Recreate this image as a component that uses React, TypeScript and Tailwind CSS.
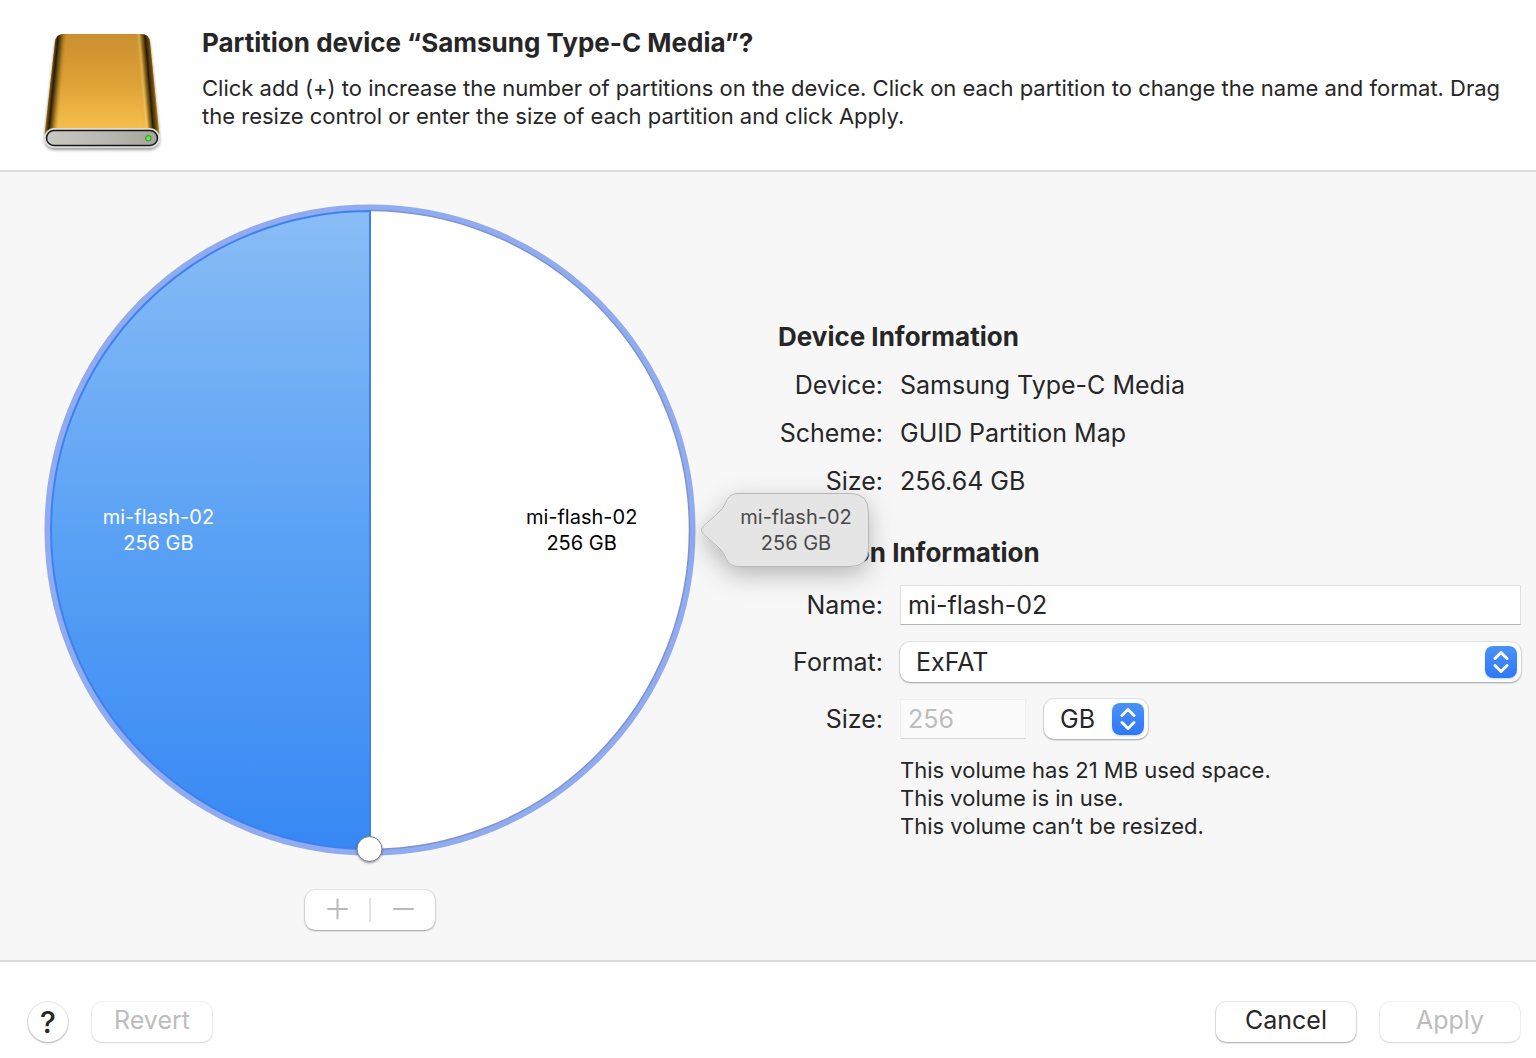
import React, { useState } from 'react';

const DEVICE_INFO = [
  { label: 'Device:', value: 'Samsung Type-C Media' },
  { label: 'Scheme:', value: 'GUID Partition Map' },
  { label: 'Size:', value: '256.64 GB' },
];

const NOTES = [
  'This volume has 21 MB used space.',
  'This volume is in use.',
  'This volume can’t be resized.',
];

const RAISED = 'bg-white shadow-[0_0_0_1px_rgba(0,0,0,0.07),0_1px_2px_rgba(0,0,0,0.3)]';
const RAISED_DISABLED = 'bg-white shadow-[0_0_0_1px_rgba(0,0,0,0.04),0_1px_2px_rgba(0,0,0,0.14)]';

function DriveIcon() {
  return (
    <svg className="w-[124px] h-[128px] shrink-0" viewBox="0 0 124 128" aria-hidden="true">
      <defs>
        <linearGradient id="gold" x1="0" y1="0" x2="0" y2="1">
          <stop offset="0" stopColor="#c98f2f" />
          <stop offset="0.45" stopColor="#dba035" />
          <stop offset="1" stopColor="#f8c24d" />
        </linearGradient>
        <linearGradient id="edgeLeft" gradientUnits="userSpaceOnUse" x1="8" y1="60" x2="22" y2="61.4">
          <stop offset="0" stopColor="#c08a2a" stopOpacity="0.5" />
          <stop offset="0.15" stopColor="#5c4008" stopOpacity="0.8" />
          <stop offset="0.35" stopColor="#1d1402" stopOpacity="0.95" />
          <stop offset="0.6" stopColor="#5c4008" stopOpacity="0.7" />
          <stop offset="1" stopColor="#c08a2a" stopOpacity="0" />
        </linearGradient>
        <linearGradient id="edgeRight" gradientUnits="userSpaceOnUse" x1="116" y1="60" x2="100" y2="61.4">
          <stop offset="0" stopColor="#c08a2a" stopOpacity="0.5" />
          <stop offset="0.15" stopColor="#5c4008" stopOpacity="0.8" />
          <stop offset="0.4" stopColor="#1d1402" stopOpacity="0.95" />
          <stop offset="0.62" stopColor="#6c4c0c" stopOpacity="0.6" />
          <stop offset="0.8" stopColor="#ffe08a" stopOpacity="0.3" />
          <stop offset="1" stopColor="#c08a2a" stopOpacity="0" />
        </linearGradient>
        <linearGradient id="face" x1="0" y1="0" x2="1" y2="0">
          <stop offset="0" stopColor="#c9c7c3" />
          <stop offset="0.5" stopColor="#bbb9b3" />
          <stop offset="1" stopColor="#a5a69a" />
        </linearGradient>
        <filter id="driveShadow" x="-10%" y="-10%" width="120%" height="125%">
          <feDropShadow dx="0" dy="2" stdDeviation="1.5" floodColor="#000" floodOpacity="0.4" />
        </filter>
      </defs>
      <g filter="url(#driveShadow)">
        <path d="M15 14Q16 6 24 6H101Q109 6 110 14L119.500 106H4.500Z" fill="url(#gold)" />
        <path d="M15 14Q16 6 24 6H30L21 106H4.500Z" fill="url(#edgeLeft)" />
        <path d="M110 14Q109 6 101 6H95L103 106H119.500Z" fill="url(#edgeRight)" />
        <rect x="4" y="100" width="116" height="20" rx="10" fill="#dedcd6" />
      </g>
      <rect x="6.500" y="102.500" width="111" height="15" rx="7.500" fill="url(#face)" stroke="#15181d" strokeWidth="1.500" />
      <circle cx="108.300" cy="110.300" r="3.200" fill="#4f9a3c" />
      <circle cx="108.300" cy="110.300" r="2" fill="#5ef04c" />
    </svg>
  );
}

function PartitionChart() {
  return (
    <div className="relative w-full">
      <svg className="block w-full overflow-visible" viewBox="0 0 652 652" aria-hidden="true">
        <defs>
          <linearGradient id="slice" gradientUnits="userSpaceOnUse" x1="0" y1="6" x2="0" y2="646">
            <stop offset="0" stopColor="#89bdf5" />
            <stop offset="0.5" stopColor="#5ba2f5" />
            <stop offset="1" stopColor="#3788f4" />
          </linearGradient>
          <filter id="knobShadow" x="-30%" y="-30%" width="160%" height="160%">
            <feDropShadow dx="0" dy="1" stdDeviation="1" floodColor="#000" floodOpacity="0.45" />
          </filter>
        </defs>
        <circle cx="326" cy="326" r="322.500" fill="#fff" stroke="#90abf0" strokeWidth="6" />
        <path d="M326 6.500A319.500 319.500 0 0 1 326 645.500" fill="none" stroke="#7d94cf" strokeWidth="1.500" />
        <path d="M326 7A319 319 0 0 0 326 645Z" fill="url(#slice)" stroke="#3d80f2" strokeWidth="2" />
        <circle cx="325.500" cy="645" r="12.500" fill="#fff" stroke="#767b85" strokeWidth="1" filter="url(#knobShadow)" />
      </svg>

      {/* Slice labels */}
      <div className="absolute inset-0 flex items-center justify-between px-[9%] text-[20px] leading-[26px] text-center">
        <p className="text-white">mi-flash-02<br />256 GB</p>
        <p className="text-black">mi-flash-02<br />256 GB</p>
      </div>

      {/* Callout for the selected slice */}
      <div className="absolute z-10 left-full top-1/2 -translate-y-1/2 ml-1 w-[170px] h-[76px]">
        <svg className="absolute inset-0 w-full h-full overflow-visible" viewBox="0 0 170 76" aria-hidden="true">
          <defs>
            <filter id="calloutShadow" x="-30%" y="-50%" width="160%" height="220%">
              <feDropShadow dx="0" dy="8" stdDeviation="12" floodColor="#000" floodOpacity="0.26" />
            </filter>
          </defs>
          <path
            d="M38 1.500H150Q168.500 1.500 168.500 20V56Q168.500 74.500 150 74.500H38C30 74.500 27 69 25 64Q23 59 18 55L3.500 42Q-.5 38 3.500 34L18 21Q23 17 25 12C27 7 30 1.500 38 1.500Z"
            fill="#e5e5e5"
            stroke="#b8b8b8"
            strokeWidth="1"
            filter="url(#calloutShadow)"
          />
        </svg>
        <p className="relative pl-[22px] pt-3 text-[20px] leading-[26px] text-center text-[#4a4a4a]">
          mi-flash-02<br />256 GB
        </p>
      </div>
    </div>
  );
}

function Stepper() {
  return (
    <span className="pointer-events-none absolute right-1 top-1 flex size-8 items-center justify-center rounded-lg bg-linear-to-b from-[#4a92f8] to-[#3077f5] shadow-[0_1px_2px_rgba(48,119,245,0.3)]">
      <svg className="w-4 h-6" viewBox="0 0 16 24" fill="none" stroke="#fff" strokeWidth="3" strokeLinecap="round" strokeLinejoin="round" aria-hidden="true">
        <path d="M2 8.500L8 2.500L14 8.500M2 15.500L8 21.500L14 15.500" />
      </svg>
    </span>
  );
}

function PopUp({ id, label, value }: { id: string; label?: string; value: string }) {
  return (
    <div className={`relative h-10 rounded-[10px] ${RAISED}`}>
      <select id={id} aria-label={label} className="h-10 w-full appearance-none rounded-[10px] bg-transparent pl-4 pr-[52px] pb-1 outline-none" defaultValue={value}>
        <option value={value}>{value}</option>
      </select>
      <Stepper />
    </div>
  );
}

export default function App() {
  const [name, setName] = useState('mi-flash-02');

  return (
    <div className="flex min-h-screen flex-col bg-white font-['Inter','Liberation_Sans',sans-serif] text-[25px] text-[#262626]">
      <header className="flex min-h-[172px] items-start gap-[38px] border-b-2 border-[#dcdcdc] pl-10 pr-4 pt-7">
        <DriveIcon />
        <div>
          <h1 className="text-[26px] leading-[30px] font-bold">Partition device “Samsung Type-C Media”?</h1>
          <p className="mt-4 text-[22px] leading-7">
            Click add (+) to increase the number of partitions on the device. Click on each partition to change the name and format. Drag
            the resize control or enter the size of each partition and click Apply.
          </p>
        </div>
      </header>

      <main className="flex grow items-start gap-[82px] border-b-2 border-[#dcdcdc] bg-[#f7f7f7] pl-11 pr-[15px]">
        <section className="flex flex-[0_1_652px] flex-col items-center pt-8 pb-[30px]">
          <PartitionChart />
          <div className={`mt-[34px] flex h-10 w-[130px] items-center rounded-[10px] ${RAISED}`}>
            <button type="button" disabled aria-label="Add partition" className="flex h-10 flex-1 items-center justify-center">
              <svg className="size-6" viewBox="0 0 24 24" stroke="#b9b9b9" strokeWidth="2" strokeLinecap="round" aria-hidden="true">
                <path d="M3 11H22M12.500 1.500V20.500" />
              </svg>
            </button>
            <span className="h-6 w-0.5 bg-[#e2e2e2]" />
            <button type="button" disabled aria-label="Remove partition" className="flex h-10 flex-1 items-center justify-center">
              <svg className="size-6" viewBox="0 0 24 24" stroke="#b9b9b9" strokeWidth="2" strokeLinecap="round" aria-hidden="true">
                <path d="M3 11H22" />
              </svg>
            </button>
          </div>
        </section>

        <section className="min-w-0 flex-1 pt-[141px]">
          <h2 className="text-[26px] leading-[48px] font-bold">Device Information</h2>
          <dl className="grid grid-cols-[105px_1fr] gap-x-[17px] leading-[48px]">
            {DEVICE_INFO.map(({ label, value }) => (
              <React.Fragment key={label}>
                <dt className="text-right">{label}</dt>
                <dd>{value}</dd>
              </React.Fragment>
            ))}
          </dl>

          <h2 className="mt-6 text-[26px] leading-[48px] font-bold">Partition Information</h2>
          <form className="mt-2 grid grid-cols-[105px_1fr] items-center gap-x-[17px] gap-y-[17px] leading-10" onSubmit={(e) => e.preventDefault()}>
            <label htmlFor="name" className="text-right">Name:</label>
            <input
              id="name"
              type="text"
              className="h-10 w-full min-w-0 border border-[#e0e0e0] border-b-[#b4b4b4] bg-white px-[7px] outline-none"
              value={name}
              onChange={(e) => setName(e.target.value)}
            />

            <label htmlFor="format" className="text-right">Format:</label>
            <PopUp id="format" value="ExFAT" />

            <label htmlFor="size" className="text-right">Size:</label>
            <div className="flex gap-[18px]">
              <input
                id="size"
                type="text"
                disabled
                className="h-10 w-[126px] border border-[#f0f0f0] border-b-[#d6d6d6] bg-[#fbfbfb] px-[7px] text-[#bdbdbd]"
                defaultValue="256"
              />
              <PopUp id="unit" label="Size unit" value="GB" />
            </div>

            <div className="col-start-2 text-[22px] leading-7">
              {NOTES.map((note) => (
                <p key={note}>{note}</p>
              ))}
            </div>
          </form>
        </section>
      </main>

      <footer className="flex items-center pt-10 pr-4 pb-4 pl-7">
        <button type="button" aria-label="Help" className={`flex size-10 items-center justify-center rounded-full text-[30px] font-medium ${RAISED}`}>
          ?
        </button>
        <button type="button" disabled className={`ml-6 h-10 w-[120px] rounded-[10px] pb-0.5 text-[#bdbdbd] ${RAISED_DISABLED}`}>
          Revert
        </button>
        <button type="button" className={`ml-auto h-10 w-[140px] rounded-[10px] pb-0.5 ${RAISED}`}>
          Cancel
        </button>
        <button type="button" disabled className={`ml-6 h-10 w-[140px] rounded-[10px] pb-0.5 text-[#bdbdbd] ${RAISED_DISABLED}`}>
          Apply
        </button>
      </footer>
    </div>
  );
}
